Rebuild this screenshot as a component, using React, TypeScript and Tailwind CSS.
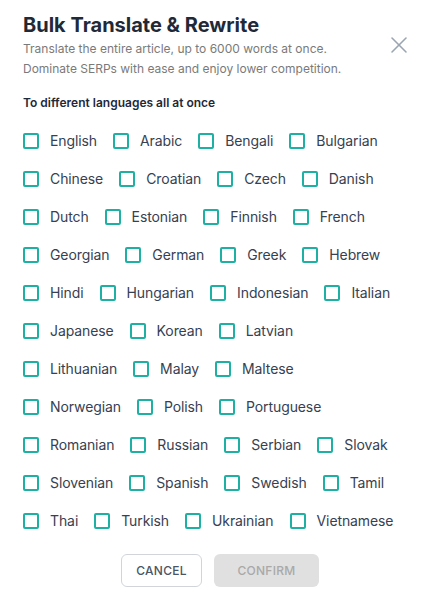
import { X } from 'lucide-react'

const rows: string[][] = [
    ['English', 'Arabic', 'Bengali', 'Bulgarian'],
    ['Chinese', 'Croatian', 'Czech', 'Danish'],
    ['Dutch', 'Estonian', 'Finnish', 'French'],
    ['Georgian', 'German', 'Greek', 'Hebrew'],
    ['Hindi', 'Hungarian', 'Indonesian', 'Italian'],
    ['Japanese', 'Korean', 'Latvian'],
    ['Lithuanian', 'Malay', 'Maltese'],
    ['Norwegian', 'Polish', 'Portuguese'],
    ['Romanian', 'Russian', 'Serbian', 'Slovak'],
    ['Slovenian', 'Spanish', 'Swedish', 'Tamil'],
    ['Thai', 'Turkish', 'Ukrainian', 'Vietnamese'],
]

function LangOption({ name }: { name: string }) {
    return (
        <label className="flex items-center gap-[11px] cursor-pointer">
            <span className="w-4 h-4 rounded-[2px] border-2 border-[#1fb0a4] bg-white" />
            <span className="text-sm text-[#374151] tracking-[-0.1px]">{name}</span>
        </label>
    )
}

export default function App() {
    return (
        <div className="w-[440px] h-[605px] bg-white font-['Inter',sans-serif] relative">
            <button className="absolute right-[27px] top-[31px] text-[#9aa5b1]">
                <X className="w-7 h-7" strokeWidth={1.3} />
            </button>
            <div className="px-[23px] pt-[11px]">
                <h2 className="text-xl font-bold text-[#1f2937] leading-7">Bulk Translate &amp; Rewrite</h2>
                <p className="text-xs leading-5 text-[#7a7a7a]">
                    Translate the entire article, up to 6000 words at once.
                    <br />
                    Dominate SERPs with ease and enjoy lower competition.
                </p>
                <p className="mt-4 text-xs leading-4 font-semibold text-[#1f2937]">To different languages all at once</p>
                <div className="mt-[18px] flex flex-col gap-[14px]">
                    {rows.map((row, i) => (
                        <div key={i} className="flex items-center gap-4 h-6">
                            {row.map((name) => (
                                <LangOption key={name} name={name} />
                            ))}
                        </div>
                    ))}
                </div>
                <div className="mt-[21px] flex justify-center gap-3">
                    <button className="w-[81px] h-[33px] rounded-md border border-[#d1d5db] text-xs font-medium text-[#4b5563] tracking-wide">
                        CANCEL
                    </button>
                    <button className="w-[105px] h-[33px] rounded-md bg-[#e0e0e0] text-xs font-medium text-[#a9a9a9] tracking-wide">
                        CONFIRM
                    </button>
                </div>
            </div>
        </div>
    )
}
